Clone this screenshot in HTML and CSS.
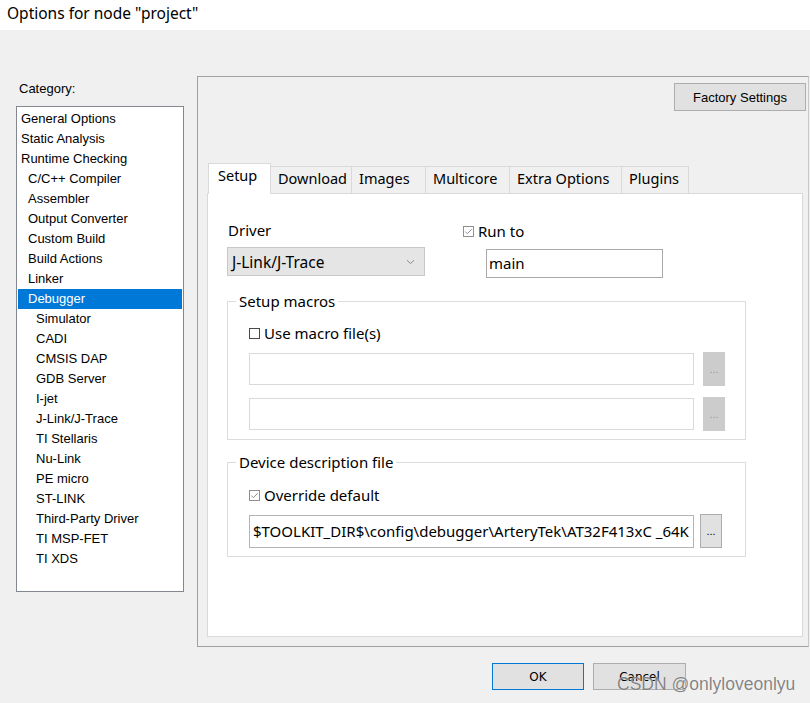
FILE: index.html
```html
<!DOCTYPE html>
<html>
<head>
<meta charset="utf-8">
<title>Options for node "project"</title>
<link rel="stylesheet" href="styles.css">
</head>
<body>
<div class="window">
  <div class="titlebar">Options for node "project"</div>
  <div class="client">
    <div class="sidebar">
      <div class="cat-label">Category:</div>
      <ul class="cat-list">
        <li class="l1">General Options</li>
        <li class="l1">Static Analysis</li>
        <li class="l1">Runtime Checking</li>
        <li class="l2">C/C++ Compiler</li>
        <li class="l2">Assembler</li>
        <li class="l2">Output Converter</li>
        <li class="l2">Custom Build</li>
        <li class="l2">Build Actions</li>
        <li class="l2">Linker</li>
        <li class="l2 selected">Debugger</li>
        <li class="l3">Simulator</li>
        <li class="l3">CADI</li>
        <li class="l3">CMSIS DAP</li>
        <li class="l3">GDB Server</li>
        <li class="l3">I-jet</li>
        <li class="l3">J-Link/J-Trace</li>
        <li class="l3">TI Stellaris</li>
        <li class="l3">Nu-Link</li>
        <li class="l3">PE micro</li>
        <li class="l3">ST-LINK</li>
        <li class="l3">Third-Party Driver</li>
        <li class="l3">TI MSP-FET</li>
        <li class="l3">TI XDS</li>
      </ul>
    </div>
    <div class="right">
      <div class="panel">
        <div class="panel-top">
          <button class="btn factory">Factory Settings</button>
        </div>
        <div class="tabs">
          <div class="tabstrip">
            <div class="tab active w-setup">Setup</div>
            <div class="tab w-download">Download</div>
            <div class="tab w-images">Images</div>
            <div class="tab w-multicore">Multicore</div>
            <div class="tab w-extra">Extra Options</div>
            <div class="tab w-plugins">Plugins</div>
          </div>
          <div class="tab-body">
            <div class="top-row">
              <div class="driver-col">
                <div class="label">Driver</div>
                <div class="combo">
                  <span>J-Link/J-Trace</span>
                  <svg class="chev" width="9" height="6" viewBox="0 0 9 6"><path d="M1 1.2 L4.5 4.6 L8 1.2" fill="none" stroke="#8a8a8a" stroke-width="1"/></svg>
                </div>
              </div>
              <div class="runto-col">
                <div class="check-row">
                  <svg class="cb" width="11" height="11" viewBox="0 0 11 11"><rect x="0.5" y="0.5" width="10" height="10" fill="#fff" stroke="#8f8f8f"/><path d="M2.3 5.6 L4.4 7.7 L8.7 3.2" fill="none" stroke="#8f8f8f" stroke-width="1"/></svg>
                  <span>Run to</span>
                </div>
                <div class="textbox runto">main</div>
              </div>
            </div>

            <div class="group macros">
              <div class="group-title">Setup macros</div>
              <div class="check-row">
                <svg class="cb" width="11" height="11" viewBox="0 0 11 11"><rect x="0.5" y="0.5" width="10" height="10" fill="#fff" stroke="#4a4a4a"/></svg>
                <span>Use macro file(s)</span>
              </div>
              <div class="file-row">
                <div class="textbox disabled"></div>
                <button class="btn dots disabled">...</button>
              </div>
              <div class="file-row second">
                <div class="textbox disabled"></div>
                <button class="btn dots disabled">...</button>
              </div>
            </div>

            <div class="group device">
              <div class="group-title">Device description file</div>
              <div class="check-row">
                <svg class="cb" width="11" height="11" viewBox="0 0 11 11"><rect x="0.5" y="0.5" width="10" height="10" fill="#fff" stroke="#8f8f8f"/><path d="M2.3 5.6 L4.4 7.7 L8.7 3.2" fill="none" stroke="#8f8f8f" stroke-width="1"/></svg>
                <span>Override default</span>
              </div>
              <div class="file-row path-row">
                <div class="textbox path">$TOOLKIT_DIR$\config\debugger\ArteryTek\AT32F413xC _64K</div>
                <button class="btn dots">...</button>
              </div>
            </div>
          </div>
        </div>
      </div>
      <div class="footer">
        <button class="btn ok">OK</button>
        <button class="btn cancel">Cancel</button>
      </div>
    </div>
  </div>
  <div class="watermark">CSDN @onlyloveonlyu</div>
</div>
</body>
</html>
```

FILE: styles.css
```css
* { box-sizing: border-box; }
html, body { margin: 0; padding: 0; }
body { background: #f0f0f0; width: 810px; height: 703px; overflow: hidden; }

.window {
  position: relative;
  width: 810px;
  height: 703px;
  background: #f0f0f0;
  font-family: "Noto Sans", "Open Sans", sans-serif;
  color: #000;
}

.titlebar {
  height: 30px;
  background: #fff;
  padding-left: 7px;
  font-size: 15.5px;
  line-height: 26px;
  color: #000;
}

.client {
  display: flex;
  height: 673px;
}

.sidebar {
  width: 197px;
  padding-left: 16px;
  flex: none;
}
.cat-label {
  margin-top: 51px;
  height: 16px;
  line-height: 16px;
  font-family: "Liberation Sans", Arial, sans-serif;
  font-size: 13px;
  padding-left: 3px;
  margin-bottom: 9px;
}
.cat-list {
  list-style: none;
  margin: 0;
  padding: 2px 1px 1px;
  width: 168px;
  height: 486px;
  background: #fff;
  border: 1px solid #828790;
  font-family: "Liberation Sans", Arial, sans-serif;
  font-size: 13px;
}
.cat-list li {
  height: 20px;
  line-height: 20px;
  white-space: nowrap;
}
.cat-list .l1 { padding-left: 3px; }
.cat-list .l2 { padding-left: 10px; }
.cat-list .l3 { padding-left: 18px; }
.cat-list .selected { background: #0078d7; color: #fff; }

.right {
  display: flex;
  flex-direction: column;
  width: 612px;
}

.panel {
  margin-top: 46px;
  width: 612px;
  height: 571px;
  border: 1px solid #a0a0a0;
  border-right-color: #c8c8c8;
  display: flex;
  flex-direction: column;
}
.panel-top {
  display: flex;
  justify-content: flex-end;
  padding: 6px 2px 0 0;
  height: 85px;
}

.btn {
  font-family: "Liberation Sans", Arial, sans-serif;
  font-size: 13px;
  color: #000;
  background: #e1e1e1;
  border: 1px solid #adadad;
  padding: 0;
  margin: 0;
}
.factory { width: 132px; height: 28px; }

.tabs {
  margin-left: 9px;
  width: 596px;
  display: flex;
  flex-direction: column;
}
.tabstrip {
  display: flex;
  align-items: flex-end;
  height: 31px;
  position: relative;
  z-index: 1;
}
.tab {
  height: 27px;
  background: #f0f0f0;
  border: 1px solid #d9d9d9;
  border-bottom: none;
  margin-left: -1px;
  font-size: 14.5px;
  line-height: 23px;
  padding-left: 7px;
  white-space: nowrap;
}
.tab.active {
  height: 31px;
  margin-left: 1px;
  margin-bottom: -1px;
  background: #fff;
  line-height: 23px;
  padding-left: 9px;
  position: relative;
  z-index: 2;
}
.w-setup { width: 63px; }
.w-download { width: 82px; }
.w-images { width: 75px; }
.w-multicore { width: 85px; }
.w-extra { width: 113px; }
.w-plugins { width: 68px; }

.tab-body {
  height: 444px;
  background: #fff;
  border: 1px solid #d9d9d9;
  padding: 0 0 0 19px;
  font-size: 15px;
}

.top-row {
  display: flex;
  padding-top: 25px;
  height: 98px;
}
.driver-col { width: 236px; }
.label {
  height: 20px;
  line-height: 20px;
  margin-top: 1px;
  margin-left: 1px;
}
.combo {
  margin-top: 7px;
  width: 198px;
  height: 29px;
  background: #e5e5e5;
  border: 1px solid #c8c8c8;
  display: flex;
  align-items: center;
  justify-content: space-between;
  padding: 0 9px 0 4px;
  font-size: 15.5px;
}
.chev { margin-top: 1px; }

.runto-col { display: flex; flex-direction: column; padding-top: 1px; }
.check-row {
  display: flex;
  align-items: center;
  height: 22px;
  gap: 4px;
}
.cb { flex: none; }
.textbox {
  background: #fff;
  border: 1px solid #d9d9d9;
  height: 32px;
  line-height: 30px;
  padding-left: 3px;
  white-space: nowrap;
  overflow: hidden;
}
.runto {
  margin-left: 23px;
  margin-top: 7px;
  width: 177px;
  height: 29px;
  line-height: 26px;
  border-color: #a9a9a9;
  padding-left: 2px;
}

.group {
  width: 519px;
  border: 1px solid #dcdcdc;
  padding-left: 21px;
}
.group-title {
  display: block;
  width: fit-content;
  background: #fff;
  margin: -11px 0 0 -13px;
  padding: 0 3px;
  height: 20px;
  line-height: 20px;
}
.macros {
  margin-top: 9px;
  height: 139px;
}
.macros .check-row { margin-top: 11px; }
.file-row {
  display: flex;
  align-items: center;
  gap: 9px;
  margin-top: 7px;
  height: 36px;
}
.macros .file-row.second { margin-top: 9px; }
.file-row .textbox { width: 445px; }
.dots {
  width: 22px;
  height: 34px;
  font-size: 11px;
  line-height: 30px;
}
.dots.disabled {
  background: #cccccc;
  border-color: #cccccc;
  color: #9a9a9a;
}

.device {
  margin-top: 22px;
  height: 95px;
}
.device .check-row { margin-top: 12px; }
.path-row { margin-top: 7px; gap: 6px; }
.path {
  border-color: #b4b4b4;
  font-size: 15px;
  padding-left: 3px;
  height: 33px;
}
.path-row .dots {
  background: #e1e1e1;
  border-color: #adadad;
  color: #000;
}

.footer {
  display: flex;
  gap: 9px;
  padding: 16px 0 0 295px;
}
.ok {
  width: 92px;
  height: 27px;
  border-color: #0078d7;
  font-family: "DejaVu Sans", sans-serif;
  font-size: 12px;
}
.cancel {
  width: 93px;
  height: 27px;
  font-family: "DejaVu Sans", sans-serif;
  font-size: 12px;
}

.watermark {
  position: absolute;
  left: 617px;
  top: 674px;
  font-family: "Liberation Sans", Arial, sans-serif;
  font-size: 17.5px;
  color: rgba(110, 110, 110, 0.85);
  text-shadow: 0 0 1px rgba(255,255,255,0.9);
  white-space: nowrap;
}
```
